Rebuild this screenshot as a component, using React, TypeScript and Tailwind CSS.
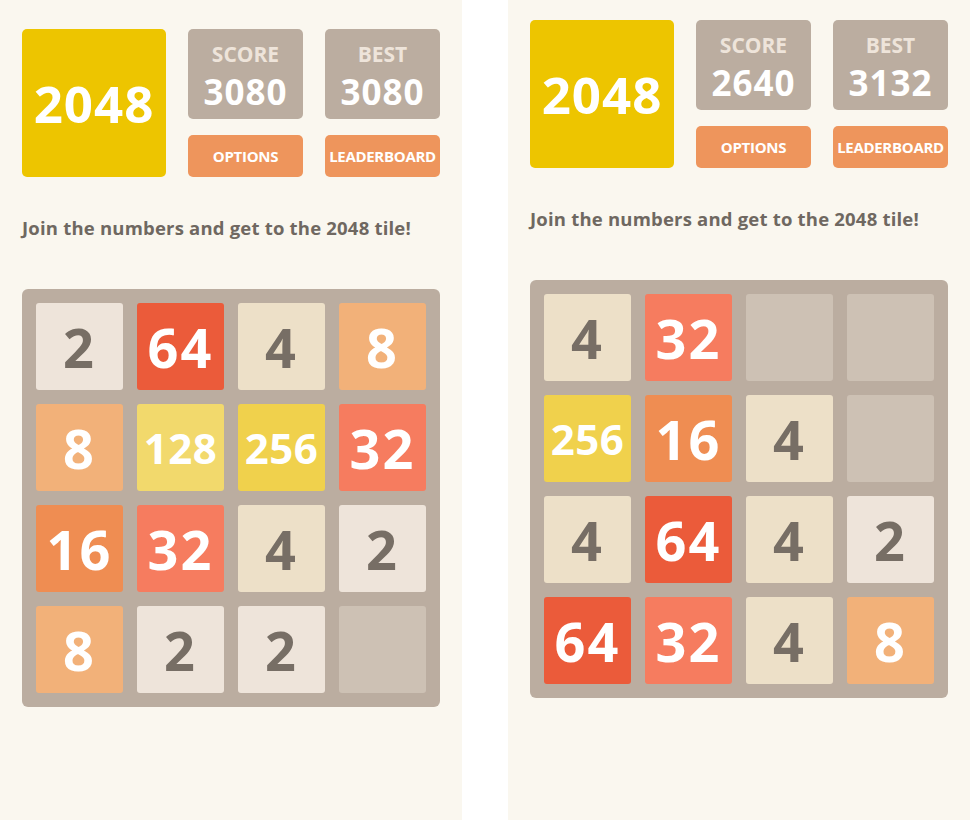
const font = { fontFamily: '"Open Sans", "DejaVu Sans", sans-serif' };

type Game = {
  score: number;
  best: number;
  grid: number[][];
  top: string;
};

const games: Game[] = [
  {
    score: 3080,
    best: 3080,
    top: "pt-[29px]",
    grid: [
      [2, 64, 4, 8],
      [8, 128, 256, 32],
      [16, 32, 4, 2],
      [8, 2, 2, 0],
    ],
  },
  {
    score: 2640,
    best: 3132,
    top: "pt-[20px]",
    grid: [
      [4, 32, 0, 0],
      [256, 16, 4, 0],
      [4, 64, 4, 2],
      [64, 32, 4, 8],
    ],
  },
];

const tileStyles: Record<number, string> = {
  0: "bg-[#cdc1b4]",
  2: "bg-[#eee4da] text-[#776e65]",
  4: "bg-[#ede0c8] text-[#776e65]",
  8: "bg-[#f2b179] text-white",
  16: "bg-[#ef8d52] text-white",
  32: "bg-[#f67c5f] text-white",
  64: "bg-[#eb5b3a] text-white",
  128: "bg-[#f2d96c] text-white",
  256: "bg-[#f0d14c] text-white",
};

function Tile({ value }: { value: number }) {
  const size = value >= 100 ? "text-[42px] tracking-[0.5px]" : "text-[54px] tracking-[2px]";
  return (
    <div
      className={`flex h-[87px] w-[87px] items-center justify-center rounded-[3px] font-bold leading-none ${size} ${tileStyles[value]}`}
    >
      {value > 0 ? value : ""}
    </div>
  );
}

function ScoreBox({ label, value }: { label: string; value: number }) {
  return (
    <div className="flex h-[90px] w-[115px] flex-col items-center rounded-[5px] bg-[#bbada0] pt-[11px]">
      <span className="text-[21px] font-bold leading-[28px] text-[#eee4da]">{label}</span>
      <span className="mt-[2px] text-[35px] font-bold leading-[44px] tracking-[1px] text-white">{value}</span>
    </div>
  );
}

function ActionButton({ label }: { label: string }) {
  return (
    <div className="flex h-[42px] w-[115px] items-center justify-center rounded-[5px] bg-[#ee955c] text-[15px] font-bold tracking-[-0.3px] text-white">
      {label}
    </div>
  );
}

function GamePanel({ game }: { game: Game }) {
  return (
    <div className={`h-full w-[462px] bg-[#faf7ef] px-[22px] ${game.top}`} style={font}>
      <div className="flex gap-[22px]">
        <div className="flex h-[148px] w-[144px] items-center justify-center rounded-[5px] bg-[#edc500] text-[51px] font-bold tracking-[1px] text-white">
          2048
        </div>
        <div className="grid grid-cols-2 gap-x-[22px] gap-y-[16px]">
          <ScoreBox label="SCORE" value={game.score} />
          <ScoreBox label="BEST" value={game.best} />
          <ActionButton label="OPTIONS" />
          <ActionButton label="LEADERBOARD" />
        </div>
      </div>
      <p className="mt-[39px] text-[18.5px] font-bold leading-[24px] tracking-[0.2px] text-[#6f6861]">
        Join the numbers and get to the 2048 tile!
      </p>
      <div className="mt-[49px] grid w-[418px] grid-cols-4 gap-[14px] rounded-[6px] bg-[#bbada0] p-[14px]">
        {game.grid.flat().map((v, i) => (
          <Tile key={i} value={v} />
        ))}
      </div>
    </div>
  );
}

export default function App() {
  return (
    <div className="flex h-[820px] w-[970px] bg-white">
      <GamePanel game={games[0]} />
      <div className="w-[46px]" />
      <GamePanel game={games[1]} />
    </div>
  );
}
